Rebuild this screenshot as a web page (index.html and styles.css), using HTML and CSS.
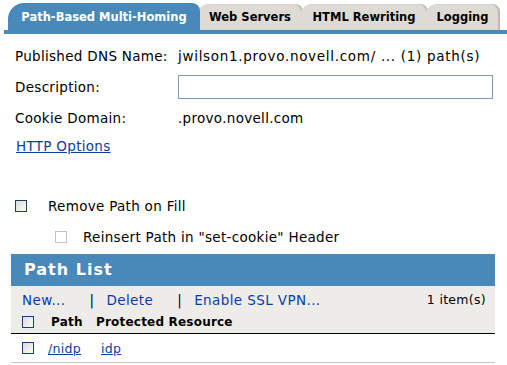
FILE: index.html
```html
<!DOCTYPE html>
<html>
<head>
<meta charset="utf-8">
<link rel="stylesheet" href="styles.css">
</head>
<body>
<div class="tabs">
  <div class="tab active">Path-Based Multi-Homing</div>
  <div class="tab t2">Web Servers</div>
  <div class="tab t3">HTML Rewriting</div>
  <div class="tab t4">Logging</div>
</div>
<div class="tabbar"></div>

<div class="form">
  <div class="label">Published DNS Name:</div>
  <div class="value wide">jwilson1.provo.novell.com/ ... (1) path(s)</div>
  <div class="label">Description:</div>
  <div class="value"><input class="text" type="text"></div>
  <div class="label">Cookie Domain:</div>
  <div class="value">.provo.novell.com</div>
</div>
<div class="httpopt"><a href="#">HTTP Options</a></div>

<div class="opt first"><span class="cb"></span><span>Remove Path on Fill</span></div>
<div class="opt second"><span class="cb dis"></span><span>Reinsert Path in "set-cookie" Header</span></div>

<div class="plist">
  <div class="phead">Path List</div>
  <div class="toolbar">
    <div class="actions">
      <a href="#" class="act">New...</a><span class="sep">|</span><a href="#" class="act">Delete</a><span class="sep">|</span><a href="#" class="act">Enable SSL VPN...</a>
      <span class="count">1 item(s)</span>
    </div>
    <div class="cols">
      <span class="cb"></span><span class="c1">Path</span><span class="c2">Protected Resource</span>
    </div>
  </div>
  <div class="row">
    <span class="cb"></span><a href="#" class="c1">/nidp</a><a href="#" class="c2">idp</a>
  </div>
</div>
</body>
</html>
```
FILE: styles.css
```css
body {
  margin: 0;
  font-family: "DejaVu Sans", Verdana, sans-serif;
  font-size: 13.5px;
  letter-spacing: 0.3px;
  color: #000;
  background: #fff;
}
.tabs {
  display: flex;
  align-items: flex-end;
  height: 30px;
  padding-left: 8px;
  white-space: nowrap;
}
.tab {
  flex: none;
  box-sizing: border-box;
  height: 26px;
  line-height: 27px;
  font-weight: bold;
  font-size: 11.5px;
  letter-spacing: 0;
  text-align: center;
  background: #dedbd4;
  color: #000;
  border-top-left-radius: 12px;
  border-top-right-radius: 8px;
  box-shadow: inset -2px 0 1px #bdb9b1;
  margin-right: -3px;
}
.tab.active {
  width: 192px;
  height: 27px;
  line-height: 28px;
  background: #4889ba;
  color: #fff;
  box-shadow: none;
  border-top-left-radius: 16px;
  position: relative;
  z-index: 1;
}
.tab.t2 { width: 106px; }
.tab.t3 { width: 128px; }
.tab.t4 { width: 75px; }
.tabbar {
  height: 4px;
  margin-left: 4px;
  background: #4889ba;
}
.form {
  display: grid;
  grid-template-columns: 163px 1fr;
  grid-auto-rows: 31px;
  align-items: center;
  padding: 6px 14px 0 15px;
  white-space: nowrap;
}
.value.wide {
  letter-spacing: 0.7px;
}
.text {
  display: block;
  box-sizing: border-box;
  width: 315px;
  height: 24px;
  border: 1px solid #7a9cc0;
  margin: 0;
}
.httpopt {
  padding: 5px 0 0 16px;
  height: 28px;
}
a {
  color: #0a3ca8;
  text-decoration: underline;
}
.opt {
  display: flex;
  align-items: center;
}
.opt.first {
  margin-top: 30px;
  padding-left: 15px;
  height: 20px;
  gap: 21px;
}
.opt.second {
  margin-top: 11px;
  padding-left: 55px;
  height: 20px;
  gap: 16px;
}
.cb {
  display: inline-block;
  box-sizing: border-box;
  width: 12px;
  height: 12px;
  border: 1px solid #1c4168;
  background: linear-gradient(135deg, #dcdcd6, #fbfbf9);
  flex: none;
}
.cb.dis {
  border-color: #c4c2ba;
  background: #fff;
}
.plist {
  margin: 7px 12px 0 11px;
}
.phead {
  height: 32px;
  line-height: 32px;
  background: #4889ba;
  color: #fff;
  font-weight: bold;
  font-size: 16px;
  letter-spacing: 1px;
  padding-left: 13px;
}
.toolbar {
  background: #eeece8;
  border-bottom: 1px solid #000;
  height: 47px;
}
.actions {
  display: flex;
  align-items: center;
  height: 27px;
  padding-left: 11px;
  padding-right: 9px;
  letter-spacing: 0.4px;
}
.act {
  text-decoration: none;
}
.sep {
  color: #000;
  margin: 0 12px 0 24px;
}
.count {
  margin-left: auto;
  font-size: 12.5px;
  letter-spacing: 0.3px;
}
.cols {
  display: flex;
  align-items: center;
  height: 18px;
  padding-left: 11px;
  font-weight: bold;
  font-size: 12px;
  letter-spacing: 0.2px;
}
.cols .c1 { margin-left: 17px; width: 45px; }
.row {
  display: flex;
  align-items: center;
  height: 28px;
  padding-left: 11px;
  border-bottom: 1px solid #c8c6be;
  font-size: 12.5px;
}
.row .c1 { margin-left: 14px; width: 53px; }
```
